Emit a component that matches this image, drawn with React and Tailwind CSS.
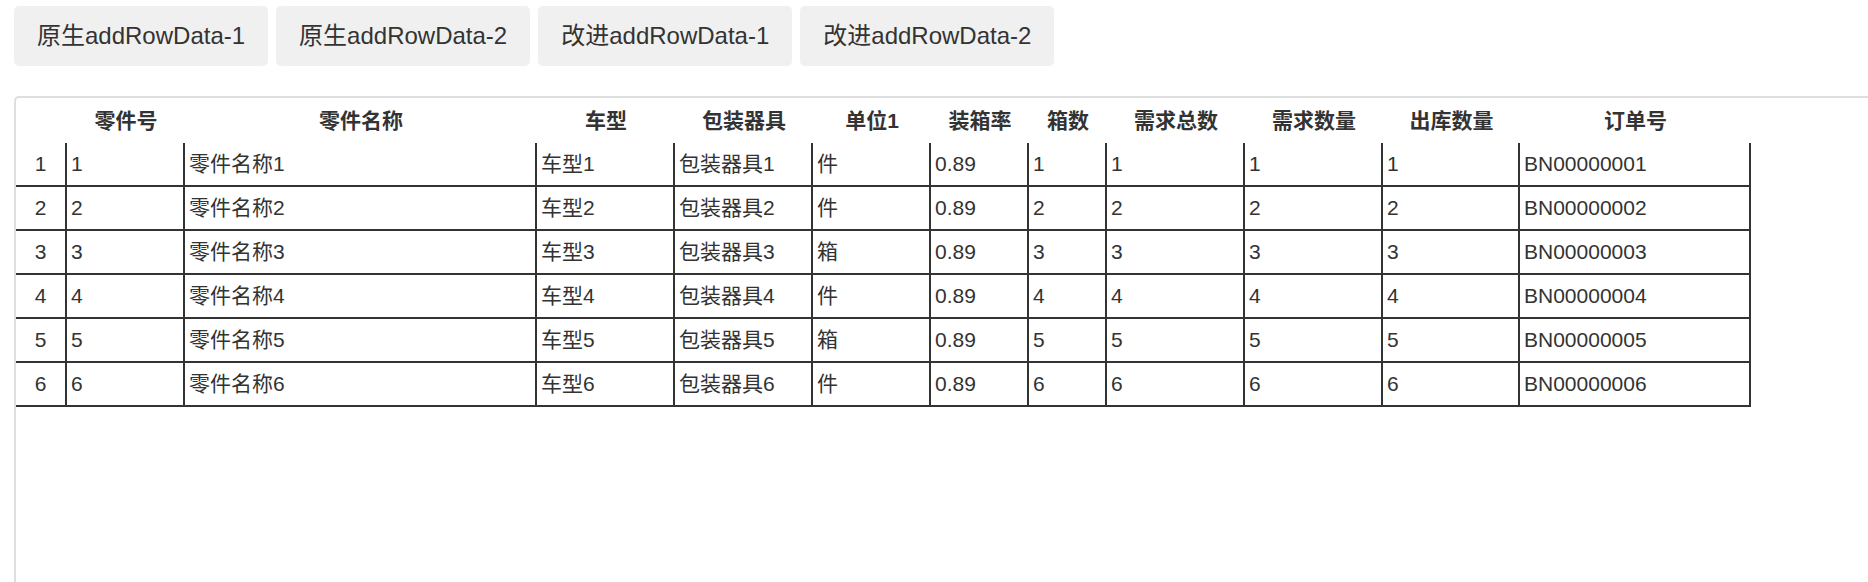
import React from "react";

const columns = [
  { key: "idx", title: "", width: "w-[51px]" },
  { key: "partNo", title: "零件号", width: "w-[118px]" },
  { key: "partName", title: "零件名称", width: "w-[352px]" },
  { key: "model", title: "车型", width: "w-[138px]" },
  { key: "pack", title: "包装器具", width: "w-[138px]" },
  { key: "unit", title: "单位1", width: "w-[118px]" },
  { key: "rate", title: "装箱率", width: "w-[98px]" },
  { key: "boxes", title: "箱数", width: "w-[78px]" },
  { key: "total", title: "需求总数", width: "w-[138px]" },
  { key: "qty", title: "需求数量", width: "w-[138px]" },
  { key: "out", title: "出库数量", width: "w-[137px]" },
  { key: "order", title: "订单号", width: "w-[231px]" },
];

const units = ["件", "件", "箱", "件", "箱", "件"];

const rows = units.map((unit, i) => {
  const n = i + 1;
  return {
    idx: n,
    partNo: n,
    partName: `零件名称${n}`,
    model: `车型${n}`,
    pack: `包装器具${n}`,
    unit,
    rate: "0.89",
    boxes: n,
    total: n,
    qty: n,
    out: n,
    order: `BN0000000${n}`,
  };
});

const buttons = [
  "原生addRowData-1",
  "原生addRowData-2",
  "改进addRowData-1",
  "改进addRowData-2",
];

const App = () => {
  return (
    <div
      className="h-[582px] overflow-hidden bg-white pt-[6px] pl-[14px] flex flex-col text-[#333]"
      style={{ fontFamily: '"Liberation Sans", "Noto Sans CJK SC", sans-serif' }}
    >
      {/* Buttons */}
      <div className="flex gap-[8px]">
        {buttons.map((label) => (
          <button
            key={label}
            className="h-[60px] px-[23px] bg-[#f0f0f0] rounded-[5px] text-[24px] text-[#333] leading-none"
          >
            {label}
          </button>
        ))}
      </div>

      {/* Grid panel */}
      <div className="mt-[30px] flex-1 border-l-2 border-t-2 border-[#dedede] rounded-tl-[5px]">
        {/* Header */}
        <div className="flex h-[45px]">
          {columns.map((col) => (
            <div
              key={col.key}
              className={`${col.width} shrink-0 flex items-center justify-center font-bold text-[21px]`}
            >
              {col.title}
            </div>
          ))}
        </div>

        {/* Body */}
        {rows.map((row) => (
          <div key={row.idx} className="flex h-[44px]">
            {columns.map((col) => (
              <div
                key={col.key}
                className={`${col.width} shrink-0 flex items-center border-r-2 border-b-2 border-[#333] text-[21px] whitespace-nowrap ${
                  col.key === "idx" ? "justify-center" : "pl-[4px]"
                }`}
              >
                {row[col.key]}
              </div>
            ))}
          </div>
        ))}
      </div>
    </div>
  );
};

export default App;
